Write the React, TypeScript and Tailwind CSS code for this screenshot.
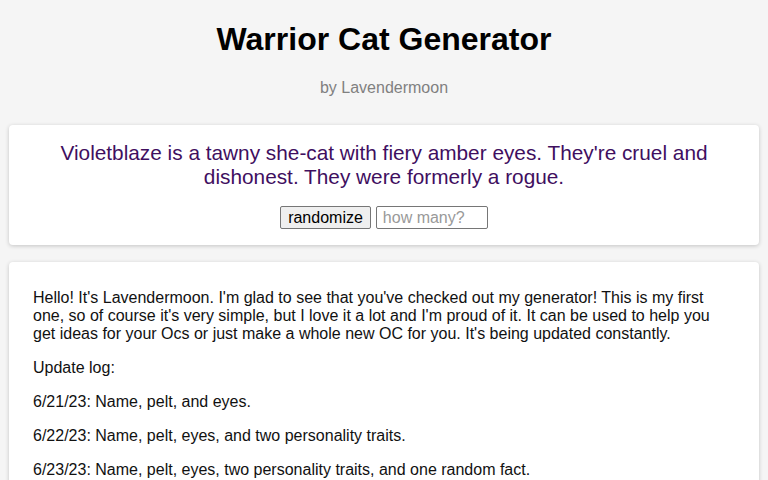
export default function App() {
  return (
    <div className="min-h-screen bg-[#f5f5f5] font-['Liberation_Sans',Arial,sans-serif] text-black">
      <div className="px-[9px]">
        <h1 className="pt-[21px] text-center text-[32px] font-bold leading-[37px]">Warrior Cat Generator</h1>
        <p className="mt-[21px] text-center text-base leading-[18px] text-[#808080]">by Lavendermoon</p>

        <div className="mt-[28px] rounded bg-white p-4 shadow-[0_1px_4px_rgba(0,0,0,0.2)]">
          <p className="text-center text-[20.8px] leading-[24px] text-[#3f0f5f]">
            Violetblaze is a tawny she-cat with fiery amber eyes. They're cruel and dishonest. They were formerly a rogue.
          </p>
          <div className="mt-[17px] flex items-center justify-center gap-[5px]">
            <button className="h-[23px] rounded-[2px] border border-[#767676] bg-[#efefef] px-[7px] text-base leading-[18px]">
              randomize
            </button>
            <input
              placeholder="how many?"
              className="h-[23px] w-[112px] rounded-[2px] border border-[#767676] bg-white px-[6px] text-base leading-[18px] placeholder:text-[#999]"
            />
          </div>
        </div>

        <div className="mt-[17px] rounded bg-white px-6 pt-[11px] pb-2 text-base leading-[18px] text-[#111] shadow-[0_1px_4px_rgba(0,0,0,0.2)]">
          <p className="my-4">
            Hello! It's Lavendermoon. I'm glad to see that you've checked out my generator! This is my first one, so of course it's very simple, but I love it a lot and I'm proud of it. It can be used to help you get ideas for your Ocs or just make a whole new OC for you. It's being updated constantly.
          </p>
          <p className="my-4">Update log:</p>
          <p className="my-4">6/21/23: Name, pelt, and eyes.</p>
          <p className="my-4">6/22/23: Name, pelt, eyes, and two personality traits.</p>
          <p className="my-4">6/23/23: Name, pelt, eyes, two personality traits, and one random fact.</p>
        </div>
      </div>
    </div>
  )
}
